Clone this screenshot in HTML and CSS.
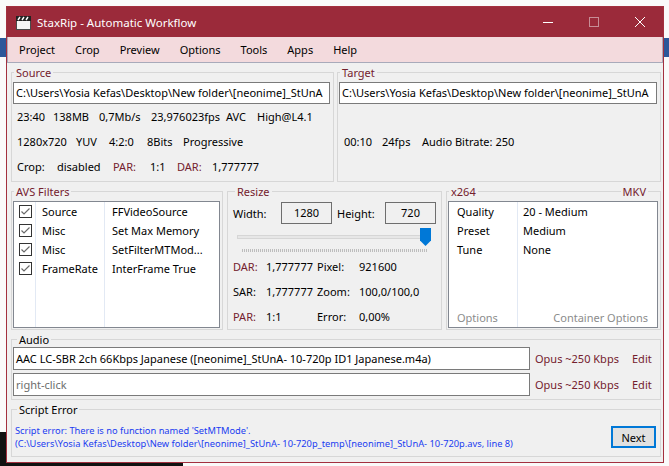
FILE: index.html
```html
<!DOCTYPE html>
<html lang="en">
<head>
    <meta charset="UTF-8">
    <meta name="viewport" content="width=device-width, initial-scale=1.0">
    <title>StaxRip - Automatic Workflow</title>
    <link rel="stylesheet" href="styles.css">
</head>
<body>

    <div class="window">
        <!-- Title bar -->
        <div class="titlebar">
            <svg class="app-icon" width="15" height="15" viewBox="0 0 15 15">
                <rect x="0.5" y="5.5" width="14" height="9" fill="#f6f6f6" stroke="#4a4a4a"/>
                <rect x="0.5" y="1.5" width="14" height="4" fill="#222" stroke="#222"/>
                <path d="M2 5 L4 2 M6 5 L8 2 M10 5 L12 2" stroke="#fff" stroke-width="1.4"/>
            </svg>
            <span class="title">StaxRip - Automatic Workflow</span>
            <div class="caption-buttons">
                <span class="cap-btn">
                    <svg width="10" height="10" viewBox="0 0 10 10"><path d="M0 5.5 H10" stroke="#fff"/></svg>
                </span>
                <span class="cap-btn">
                    <svg width="10" height="10" viewBox="0 0 10 10"><rect x="0.5" y="0.5" width="9" height="9" fill="none" stroke="#c78d96"/></svg>
                </span>
                <span class="cap-btn">
                    <svg width="10" height="10" viewBox="0 0 10 10"><path d="M0 0 L10 10 M10 0 L0 10" stroke="#fff"/></svg>
                </span>
            </div>
        </div>

        <!-- Menu -->
        <nav class="menubar">
            <span>Project</span>
            <span>Crop</span>
            <span>Preview</span>
            <span>Options</span>
            <span>Tools</span>
            <span>Apps</span>
            <span>Help</span>
        </nav>

        <div class="content">
            <!-- Source / Target -->
            <div class="row-top">
                <div class="group group-io">
                    <div class="group-title">Source</div>
                    <div class="textbox">C:\Users\Yosia Kefas\Desktop\New folder\[neonime]_StUnA</div>
                    <div class="info src-a">
                        <span>23:40</span><span>138MB</span><span>0,7Mb/s</span><span>23,976023fps</span><span>AVC</span><span>High@L4.1</span>
                    </div>
                    <div class="info src-b">
                        <span>1280x720</span><span>YUV</span><span>4:2:0</span><span>8Bits</span><span>Progressive</span>
                    </div>
                    <div class="info src-c">
                        <span>Crop:</span><span>disabled</span><span class="accent">PAR:</span><span>1:1</span><span class="accent">DAR:</span><span>1,777777</span>
                    </div>
                </div>
                <div class="group group-io group-target">
                    <div class="group-title">Target</div>
                    <div class="textbox">C:\Users\Yosia Kefas\Desktop\New folder\[neonime]_StUnA</div>
                    <div class="info"></div>
                    <div class="info tgt">
                        <span>00:10</span><span>24fps</span><span>Audio Bitrate: 250</span>
                    </div>
                </div>
            </div>

            <!-- Filters / Resize / Encoder -->
            <div class="row-mid">
                <div class="group group-mid">
                    <div class="group-title">AVS Filters</div>
                    <div class="listbox filters">
                        <div class="filter-row">
                            <span class="check"><svg width="13" height="13" viewBox="0 0 13 13"><rect x="0.5" y="0.5" width="12" height="12" fill="#fff" stroke="#333"/><path d="M2.5 6.5 L5 9 L10.5 3.5" fill="none" stroke="#6a6a6a" stroke-width="1.2"/></svg></span>
                            <span>Source</span><span>FFVideoSource</span>
                        </div>
                        <div class="filter-row">
                            <span class="check"><svg width="13" height="13" viewBox="0 0 13 13"><rect x="0.5" y="0.5" width="12" height="12" fill="#fff" stroke="#333"/><path d="M2.5 6.5 L5 9 L10.5 3.5" fill="none" stroke="#6a6a6a" stroke-width="1.2"/></svg></span>
                            <span>Misc</span><span>Set Max Memory</span>
                        </div>
                        <div class="filter-row">
                            <span class="check"><svg width="13" height="13" viewBox="0 0 13 13"><rect x="0.5" y="0.5" width="12" height="12" fill="#fff" stroke="#333"/><path d="M2.5 6.5 L5 9 L10.5 3.5" fill="none" stroke="#6a6a6a" stroke-width="1.2"/></svg></span>
                            <span>Misc</span><span>SetFilterMTMod...</span>
                        </div>
                        <div class="filter-row">
                            <span class="check"><svg width="13" height="13" viewBox="0 0 13 13"><rect x="0.5" y="0.5" width="12" height="12" fill="#fff" stroke="#333"/><path d="M2.5 6.5 L5 9 L10.5 3.5" fill="none" stroke="#6a6a6a" stroke-width="1.2"/></svg></span>
                            <span>FrameRate</span><span>InterFrame True</span>
                        </div>
                    </div>
                </div>

                <div class="group group-mid group-resize">
                    <div class="group-title">Resize</div>
                    <div class="size-row">
                        <span class="size-label">Width:</span>
                        <span class="size-box">1280</span>
                        <span class="size-label size-gap">Height:</span>
                        <span class="size-box">720</span>
                    </div>
                    <div class="slider">
                        <div class="slider-track"></div>
                        <div class="slider-ticks"></div>
                        <svg class="slider-thumb" width="11" height="18" viewBox="0 0 11 18">
                            <path d="M0 0 H11 V12.5 L5.5 18 L0 12.5 Z" fill="#0078d7"/>
                        </svg>
                    </div>
                    <div class="info resize-info">
                        <span class="accent">DAR:</span><span>1,777777</span><span>Pixel:</span><span>921600</span>
                    </div>
                    <div class="info resize-info">
                        <span>SAR:</span><span>1,777777</span><span>Zoom:</span><span>100,0/100,0</span>
                    </div>
                    <div class="info resize-info">
                        <span class="accent">PAR:</span><span>1:1</span><span>Error:</span><span>0,00%</span>
                    </div>
                </div>

                <div class="group group-mid group-encoder">
                    <div class="group-title">x264</div>
                    <div class="group-title-right">MKV</div>
                    <div class="listbox encoder">
                        <div class="enc-row"><span>Quality</span><span>20 - Medium</span></div>
                        <div class="enc-row"><span>Preset</span><span>Medium</span></div>
                        <div class="enc-row"><span>Tune</span><span>None</span></div>
                        <div class="enc-footer"><span>Options</span><span>Container Options</span></div>
                    </div>
                </div>
            </div>

            <!-- Audio -->
            <div class="group group-audio">
                <div class="group-title plain">Audio</div>
                <div class="audio-row">
                    <div class="textbox audio-box">AAC LC-SBR 2ch 66Kbps Japanese ([neonime]_StUnA- 10-720p ID1 Japanese.m4a)</div>
                    <span class="audio-codec">Opus ~250 Kbps</span>
                    <span class="accent">Edit</span>
                </div>
                <div class="audio-row">
                    <div class="textbox audio-box hint">right-click</div>
                    <span class="audio-codec">Opus ~250 Kbps</span>
                    <span class="accent">Edit</span>
                </div>
            </div>

            <!-- Script error -->
            <div class="group group-error">
                <div class="group-title plain">Script Error</div>
                <div class="error-body">
                    <div class="error-text">
                        Script error: There is no function named 'SetMTMode'.<br>
                        (C:\Users\Yosia Kefas\Desktop\New folder\[neonime]_StUnA- 10-720p_temp\[neonime]_StUnA- 10-720p.avs, line 8)
                    </div>
                    <button class="next-button">Next</button>
                </div>
            </div>
        </div>
    </div>

</body>
</html>
```

FILE: styles.css
```css
* {
    box-sizing: border-box;
}
body {
    margin: 0;
    height: 466px;
    overflow: hidden;
    font-family: "Noto Sans", "Liberation Sans", sans-serif;
    font-size: 11px;
    color: #000;
    background:
        linear-gradient(#111, #111) 0 432px / 6px 34px no-repeat,
        linear-gradient(#111, #111) 0 463px / 183px 3px no-repeat,
        linear-gradient(#2b579a, #2b579a) 0 38px / 100% 19px no-repeat,
        #fafafa;
}
.window {
    margin: 6px 0 0 6px;
    width: 658px;
    height: 457px;
    border: 1px solid #a3303f;
    background-color: #f0f0f0;
    display: flex;
    flex-direction: column;
}

/* title bar */
.titlebar {
    height: 30px;
    flex-shrink: 0;
    background-color: #9b2a3a;
    color: white;
    display: flex;
    align-items: center;
}
.app-icon {
    margin-left: 9px;
}
.title {
    margin-left: 6px;
    font-size: 11.5px;
}
.caption-buttons {
    margin-left: auto;
    display: flex;
    height: 100%;
}
.cap-btn {
    width: 46px;
    display: flex;
    align-items: center;
    justify-content: center;
}

/* menu */
.menubar {
    height: 26px;
    flex-shrink: 0;
    background-color: #f3dadd;
    border: 1px solid #a8aaba;
    border-top: none;
    display: flex;
    align-items: center;
    padding-left: 1px;
}
.menubar span {
    padding: 0 10px;
}

.content {
    padding: 0 2px 0 4px;
}

/* group boxes */
.group {
    border: 1px solid #d7d7d7;
    margin-top: 9px;
    position: relative;
}
.group-title {
    width: fit-content;
    margin: -8px 0 0 2px;
    padding: 0 2px;
    line-height: 15px;
    background-color: #f0f0f0;
    color: #74202d;
}
.group-title.plain {
    color: #000;
    margin-left: 5px;
}
.group-title-right {
    position: absolute;
    top: -8px;
    right: 12px;
    padding: 0 2px;
    line-height: 15px;
    background-color: #f0f0f0;
    color: #74202d;
}
.accent {
    color: #74202d;
}

.textbox {
    height: 22px;
    border: 1px solid #7a7a7a;
    background-color: white;
    padding: 0 2px;
    line-height: 20px;
    white-space: nowrap;
    overflow: hidden;
}
.info {
    display: grid;
    height: 25px;
    align-items: center;
    white-space: nowrap;
    padding-left: 5px;
}

/* source / target */
.row-top {
    display: grid;
    grid-template-columns: 323px 324px;
    column-gap: 3px;
}
.group-io {
    height: 110px;
}
.group-io .textbox {
    margin: 2px 3px 0 1px;
}
.src-a {
    grid-template-columns: 36px 46px 52px 75px 31px auto;
}
.src-b {
    grid-template-columns: 59px 33px 38px 36px auto;
}
.src-c {
    grid-template-columns: 40px 56px 37px 27px 35px auto;
}
.group-target .info {
    padding-left: 6px;
}
.tgt {
    grid-template-columns: 38px 40px auto;
}

/* filters / resize / encoder */
.row-mid {
    display: grid;
    grid-template-columns: 212px 215px 215px;
    column-gap: 4px;
}
.group-mid {
    height: 139px;
}
.listbox {
    margin: 2px 2px 0 1px;
    height: 127px;
    border: 1px solid #828790;
    background-color: white;
}
.filters {
    background:
        linear-gradient(#e2e9f4, #e2e9f4) 21px 0 / 1px 100% no-repeat,
        linear-gradient(#e2e9f4, #e2e9f4) 90px 0 / 1px 100% no-repeat,
        white;
}
.filter-row {
    display: grid;
    grid-template-columns: 21px 69px 1fr;
    height: 19px;
    align-items: center;
    white-space: nowrap;
}
.filter-row span:nth-child(2) {
    padding-left: 7px;
}
.filter-row span:nth-child(3) {
    padding-left: 8px;
}
.check {
    padding-left: 5px;
    display: flex;
}

.group-resize {
    padding-left: 5px;
}
.size-row {
    margin-top: 3px;
    height: 22px;
    display: flex;
    align-items: center;
}
.size-label {
    width: 48px;
}
.size-gap {
    margin-left: 5px;
}
.size-box {
    width: 51px;
    height: 22px;
    border: 1px solid #6e6e6e;
    text-align: center;
    line-height: 20px;
}
.slider {
    position: relative;
    height: 30px;
    width: 194px;
    margin-left: 4px;
}
.slider-track {
    position: absolute;
    top: 11px;
    left: 0;
    width: 193px;
    height: 4px;
    background-color: #e7e7e7;
    border: 1px solid #d6d6d6;
}
.slider-ticks {
    position: absolute;
    top: 25px;
    left: 5px;
    width: 185px;
    height: 3px;
    background: repeating-linear-gradient(to right, #bdbdbd 0 1px, transparent 1px 2px);
}
.slider-thumb {
    position: absolute;
    top: 4px;
    left: 183px;
}
.group-resize .info {
    padding-left: 0;
}
.resize-info {
    grid-template-columns: 33px 51px 42px auto;
}

.encoder {
    display: flex;
    flex-direction: column;
    background:
        linear-gradient(#e2e9f4, #e2e9f4) 68px 0 / 1px 100% no-repeat,
        white;
}
.enc-row {
    display: grid;
    grid-template-columns: 68px 1fr;
    height: 19px;
    align-items: center;
}
.enc-row span:first-child {
    padding-left: 8px;
}
.enc-row span:last-child {
    padding-left: 6px;
}
.enc-footer {
    margin-top: auto;
    height: 19px;
    display: flex;
    align-items: center;
    justify-content: space-between;
    padding: 0 9px 0 8px;
    color: #8c8c8c;
}

/* audio */
.group-audio {
    height: 61px;
}
.audio-row {
    display: flex;
    align-items: center;
    margin-left: 1px;
}
.audio-row + .audio-row {
    margin-top: 3px;
}
.audio-box {
    width: 517px;
    height: 23px;
    line-height: 21px;
}
.audio-codec {
    width: 97px;
    margin-left: 5px;
    color: #74202d;
}
.hint {
    color: #6d6d6d;
}

/* script error */
.group-error {
    height: 48px;
}
.error-body {
    height: 38px;
    display: flex;
    align-items: flex-end;
    justify-content: space-between;
    padding: 0 4px 5px 3px;
}
.error-text {
    font-size: 9.3px;
    line-height: 13px;
    color: #1a3cf0;
    white-space: nowrap;
}
.next-button {
    width: 45px;
    height: 22px;
    margin-bottom: 2px;
    padding: 0;
    border: 2px solid #0078d7;
    background-color: #e1e1e1;
    font-family: inherit;
    font-size: 11px;
    color: #000;
}
```
